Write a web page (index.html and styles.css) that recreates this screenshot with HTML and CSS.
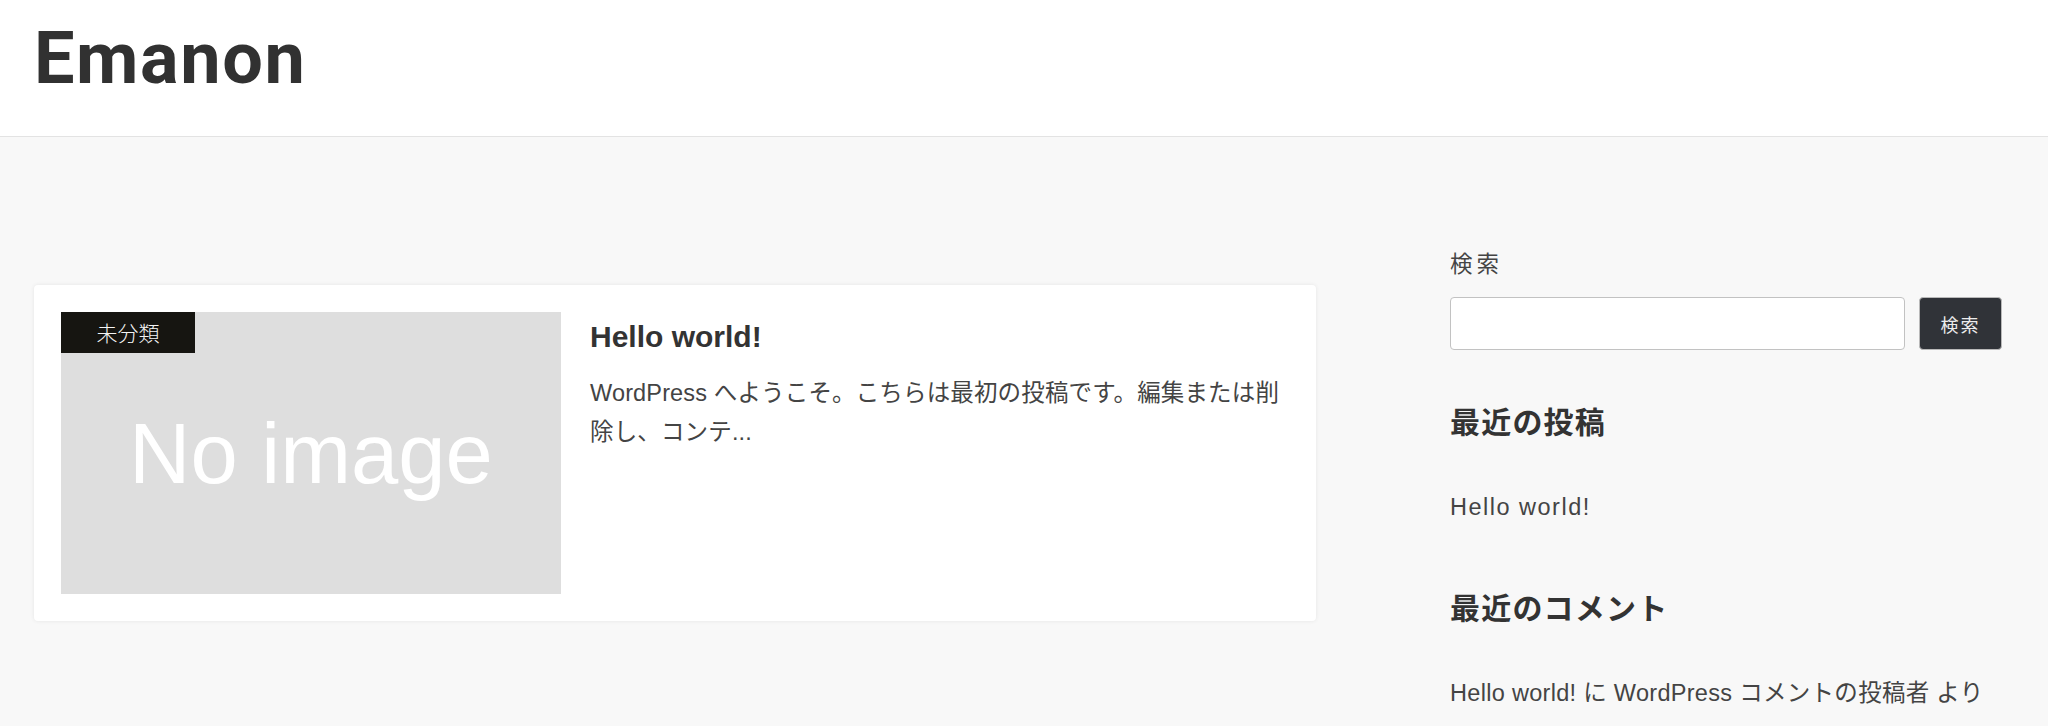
FILE: index.html
```html
<!DOCTYPE html>
<html lang="ja">
<head>
<meta charset="utf-8">
<title>Emanon</title>
<link rel="stylesheet" href="styles.css">
</head>
<body>
<header class="site-header">
  <h1 class="site-title">Emanon</h1>
</header>
<div class="content">
  <main class="main">
    <article class="card">
      <div class="thumb">
        <span class="cat">未分類</span>
        <span class="noimage">No image</span>
      </div>
      <div class="card-body">
        <h2 class="post-title">Hello world!</h2>
        <p class="excerpt">WordPress へようこそ。こちらは最初の投稿です。編集または削除し、コンテ...</p>
      </div>
    </article>
  </main>
  <aside class="sidebar">
    <section class="widget widget-search">
      <label class="search-label">検索</label>
      <div class="search-form">
        <input class="search-input" type="text">
        <button class="search-btn" type="button">検索</button>
      </div>
    </section>
    <section class="widget">
      <h3 class="widget-title">最近の投稿</h3>
      <ul class="widget-list">
        <li class="recent-post">Hello world!</li>
      </ul>
    </section>
    <section class="widget">
      <h3 class="widget-title">最近のコメント</h3>
      <ul class="widget-list">
        <li class="recent-comment">Hello world! に WordPress コメントの投稿者 より</li>
      </ul>
    </section>
  </aside>
</div>
</body>
</html>
```
FILE: styles.css
```css
* { box-sizing: border-box; }
html, body { margin: 0; padding: 0; }
body {
  background: #f8f8f8;
  color: #444;
  font-family: "Liberation Sans", "Noto Sans CJK JP", sans-serif;
  overflow: hidden;
}
.site-header {
  background: #fff;
  border-bottom: 1px solid #e3e3e3;
  padding: 23px 34px 41px;
}
.site-title {
  margin: 0;
  font-family: Roboto, "Liberation Sans", sans-serif;
  font-weight: 700;
  font-size: 72px;
  line-height: 72px;
  letter-spacing: 1.6px;
  color: #313131;
}
.content {
  display: flex;
  justify-content: space-between;
  padding: 0 46px 0 34px;
}
.main {
  width: 1282px;
  padding-top: 148px;
}
.card {
  display: flex;
  gap: 29px;
  background: #fff;
  border-radius: 4px;
  box-shadow: 0 0 4px rgba(0,0,0,0.08);
  padding: 27px;
}
.thumb {
  position: relative;
  flex: 0 0 500px;
  height: 282px;
  background: #dedede;
  display: flex;
  align-items: center;
  justify-content: center;
}
.cat {
  position: absolute;
  left: 0;
  top: 0;
  height: 41px;
  width: 134px;
  background: #161511;
  color: #f4f4f4;
  font-family: "Noto Sans CJK JP", sans-serif;
  font-size: 21px;
  font-weight: 300;
  line-height: 41px;
  text-align: center;
}
.noimage {
  font-family: "Liberation Sans", sans-serif;
  font-size: 85px;
  color: #fff;
  line-height: 1;
}
.card-body {
  flex: 1;
  padding-top: 3px;
}
.post-title {
  margin: 0;
  font-size: 30px;
  line-height: 44px;
  font-weight: 700;
  color: #333;
}
.excerpt {
  margin: 15px 0 0;
  font-size: 23.5px;
  letter-spacing: 0.15px;
  line-height: 1.65;
  color: #444;
}
.sidebar {
  width: 552px;
  padding-top: 107px;
}
.widget { margin-bottom: 49px; }
.widget-search { margin-bottom: 48px; }
.search-label {
  display: block;
  font-family: "Noto Sans CJK JP", sans-serif;
  font-size: 22.5px;
  line-height: 36px;
  letter-spacing: 4px;
  color: #444;
  margin-bottom: 17px;
}
.search-form {
  display: flex;
  gap: 14px;
}
.search-input {
  flex: 1;
  height: 53px;
  border: 1px solid #c2c2c2;
  border-radius: 4px;
  background: #fff;
  margin: 0;
}
.search-btn {
  width: 83px;
  height: 53px;
  border: 1px solid #b9b9b9;
  border-radius: 4px;
  background: #303338;
  color: #ececec;
  font-family: "Noto Sans CJK JP", sans-serif;
  font-size: 18px;
  letter-spacing: 2px;
  margin: 0;
  padding: 0;
}
.widget-title {
  margin: 0 0 45px;
  font-family: "Noto Sans CJK JP", sans-serif;
  font-size: 30px;
  line-height: 45px;
  font-weight: 700;
  letter-spacing: 1.2px;
  color: #333;
}
.widget-list {
  list-style: none;
  margin: 0;
  padding: 0 0 8px;
}
.widget-list li {
  font-size: 23.5px;
  line-height: 1.65;
  color: #444;
}
.recent-post { letter-spacing: 1.5px; }
.recent-comment { letter-spacing: 0.3px; }
```
